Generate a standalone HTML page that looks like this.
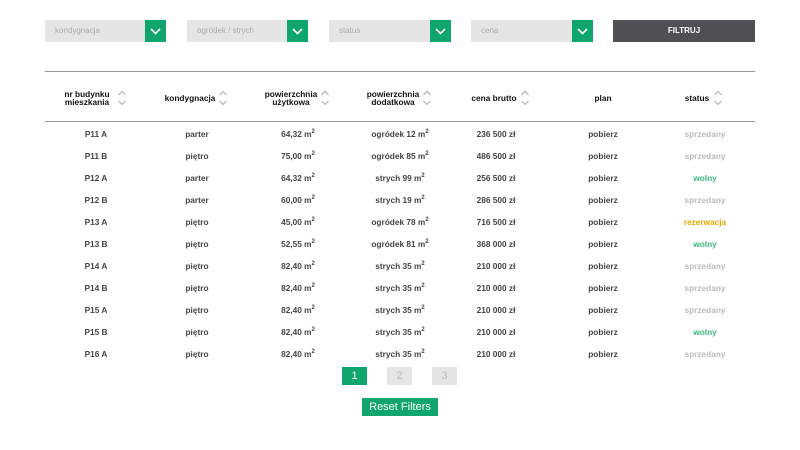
<!DOCTYPE html><html><head><style>
body{margin:0;width:800px;height:450px;background:#fff;font-family:"Liberation Sans",sans-serif;position:relative;overflow:hidden}
.sel{position:absolute;top:20px;height:22px;background:#e5e5e5;font-size:8px;color:#aaa;line-height:22px}
.sel span{padding-left:10px}
.sel i{position:absolute;right:0;top:0;width:21px;height:22px;background:#0fa56c}
.sel i svg{position:absolute;left:5px;top:6px}
.btn{position:absolute;left:613px;top:20px;width:142px;height:22px;background:#505054;color:#fff;font-size:8px;font-weight:bold;text-align:center;line-height:22px}
.hr{position:absolute;left:45px;width:710px;height:1px;background:#999}
.c{position:absolute;transform:translateX(-50%);text-align:center;font-size:8.3px;font-weight:bold;color:#444;white-space:nowrap}
.h{color:#111;line-height:8px}
.ar{position:absolute;width:10px;height:18px}
sup{font-size:6px;vertical-align:4px;line-height:0}
.pg{position:absolute;top:367px;width:25px;height:18px;background:#e5e5e5;color:#bbb;font-size:11px;text-align:center;line-height:18px}
</style></head><body>
<div class="sel" style="left:45px;width:121px"><span>kondygnacja</span><i><svg width="11" height="10"><path d="M1 3l4.5 4.5L10 3" stroke="#fff" stroke-width="1.6" fill="none"/></svg></i></div>
<div class="sel" style="left:187px;width:121px"><span>ogródek / strych</span><i><svg width="11" height="10"><path d="M1 3l4.5 4.5L10 3" stroke="#fff" stroke-width="1.6" fill="none"/></svg></i></div>
<div class="sel" style="left:329px;width:122px"><span>status</span><i><svg width="11" height="10"><path d="M1 3l4.5 4.5L10 3" stroke="#fff" stroke-width="1.6" fill="none"/></svg></i></div>
<div class="sel" style="left:471px;width:122px"><span>cena</span><i><svg width="11" height="10"><path d="M1 3l4.5 4.5L10 3" stroke="#fff" stroke-width="1.6" fill="none"/></svg></i></div>
<div class="btn">FILTRUJ</div>
<div class="hr" style="top:71px"></div>
<div class="hr" style="top:121px"></div>
<div id="hd"></div>
<div id="rows"></div>
<div class="pg" style="left:342px;background:#0fa56c;color:#fff">1</div>
<div class="pg" style="left:387px">2</div>
<div class="pg" style="left:432px">3</div>
<div style="position:absolute;left:362px;top:398px;width:76px;height:18px;background:#0fa56c;color:#fff;font-size:11px;text-align:center;line-height:18px">Reset Filters</div>
<script>
var H=[[87,"nr budynku<br>mieszkania",122],[190,"kondygnacja",223],[291,"powierzchnia<br>użytkowa",325],[393,"powierzchnia<br>dodatkowa",427],[494,"cena brutto",525],[603,"plan",0],[697,"status",718]];
var s="";H.forEach(function(h){var two=h[1].indexOf("<br>")>0;s+='<div class="c h" style="left:'+h[0]+'px;top:'+(two?90:94)+'px">'+h[1]+'</div>';if(h[2])s+='<svg class="ar" style="left:'+(h[2]-5)+'px;top:89px" viewBox="0 0 10 18"><path d="M1.5 6L5 2.5 8.5 6M1.5 12L5 15.5 8.5 12" stroke="#aaa" fill="none" stroke-width="1"/></svg>';});
document.getElementById("hd").innerHTML=s;
var R=[["P11 A","parter","64,32","ogródek 12","236 500","s"],["P11 B","piętro","75,00","ogródek 85","486 500","s"],["P12 A","parter","64,32","strych 99","256 500","w"],["P12 B","parter","60,00","strych 19","286 500","s"],["P13 A","piętro","45,00","ogródek 78","716 500","r"],["P13 B","piętro","52,55","ogródek 81","368 000","w"],["P14 A","piętro","82,40","strych 35","210 000","s"],["P14 B","piętro","82,40","strych 35","210 000","s"],["P15 A","piętro","82,40","strych 35","210 000","s"],["P15 B","piętro","82,40","strych 35","210 000","w"],["P16 A","piętro","82,40","strych 35","210 000","s"]];
var st={s:["sprzedany","#bbb"],w:["wolny","#3cb77e"],r:["rezerwacja","#e2a600"]};
s="";R.forEach(function(r,i){var y=129+i*22;
s+='<div class="c" style="left:96px;top:'+y+'px">'+r[0]+'</div><div class="c" style="left:197px;top:'+y+'px">'+r[1]+'</div><div class="c" style="left:298px;top:'+y+'px">'+r[2]+' m<sup>2</sup></div><div class="c" style="left:400px;top:'+y+'px">'+r[3]+' m<sup>2</sup></div><div class="c" style="left:496px;top:'+y+'px">'+r[4]+' zł</div><div class="c" style="left:603px;top:'+y+'px">pobierz</div><div class="c" style="left:705px;top:'+y+'px;color:'+st[r[5]][1]+'">'+st[r[5]][0]+'</div>';});
document.getElementById("rows").innerHTML=s;
</script>
</body></html>
